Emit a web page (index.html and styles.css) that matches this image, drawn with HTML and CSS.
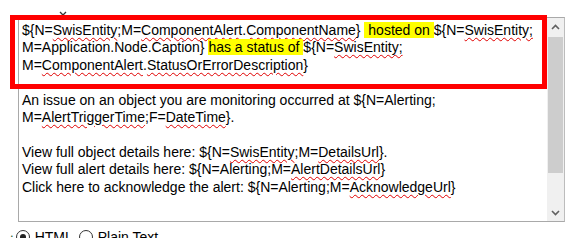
FILE: index.html
```html
<!DOCTYPE html>
<html lang="en">
<head>
    <meta charset="UTF-8">
    <title>Alert message</title>
    <link rel="stylesheet" href="styles.css">
</head>
<body>
    <div class="page">
        <svg class="caret-mark" width="8" height="5" viewBox="0 0 8 5"><path d="M1 1 L4 4 L7 1" fill="none" stroke="#333" stroke-width="1.3"/></svg>

        <div class="editor">
            <div class="editor-text">
                ${N=<span class="sp">SwisEntity</span>;M=<span class="sp">ComponentAlert</span>.<span class="sp">ComponentName</span>} <span class="hl">&nbsp;hosted on </span>${N=<span class="sp">SwisEntity;</span><br>
                M=Application.Node.Caption} <span class="hl">has a status of </span>${N=<span class="sp">SwisEntity;</span><br>
                M=<span class="sp">ComponentAlert</span>.<span class="sp">StatusOrErrorDescription</span>}<br>
                <br>
                An issue on an object you are monitoring occurred at ${N=Alerting;<br>
                M=<span class="sp">AlertTriggerTime</span>;F=<span class="sp">DateTime</span>}.<br>
                <br>
                View full object details here: ${N=<span class="sp">SwisEntity</span>;M=<span class="sp">DetailsUrl</span>}.<br>
                View full alert details here: ${N=Alerting;M=<span class="sp">AlertDetailsUrl</span>}<br>
                Click here to acknowledge the alert: ${N=Alerting;M=<span class="sp">AcknowledgeUrl</span>}
            </div>
            <div class="scrollbar">
                <div class="sb-btn">
                    <svg width="9" height="6" viewBox="0 0 9 6"><path d="M1 5 L4.5 1.5 L8 5" fill="none" stroke="#606060" stroke-width="1.6"/></svg>
                </div>
                <div class="sb-thumb"></div>
                <div class="sb-track"></div>
                <div class="sb-btn">
                    <svg width="9" height="6" viewBox="0 0 9 6"><path d="M1 1 L4.5 4.5 L8 1" fill="none" stroke="#606060" stroke-width="1.6"/></svg>
                </div>
            </div>
        </div>

        <!-- red frame over the subject lines -->
        <div class="callout"></div>

        <div class="format-row">
            <span class="dot">.</span>
            <label><span class="radio checked"></span>HTML</label>
            <label><span class="radio"></span>Plain Text</label>
        </div>
    </div>
</body>
</html>
```

FILE: styles.css
```css
* {
    margin: 0;
    padding: 0;
    box-sizing: border-box;
}

body {
    background: #fff;
    font-family: "Liberation Sans", Arial, sans-serif;
    overflow: hidden;
}

.page {
    position: relative;
    width: 565px;
    height: 238px;
    padding-top: 17px;
    overflow: hidden;
}

.caret-mark {
    position: absolute;
    left: 59px;
    top: 11px;
}

.editor {
    display: flex;
    margin-left: 18px;
    width: 547px;
    height: 205px;
    border: 1px solid #a9a9a9;
    border-right-color: #bcbcbc;
}

.editor-text {
    flex: 1;
    padding: 4px 0 0 3px;
    font-size: 14px;
    line-height: 17.4px;
    color: #000;
    white-space: nowrap;
    overflow: hidden;
}

/* spelling squiggle */
.sp {
    text-decoration: underline wavy #e00000;
    text-decoration-thickness: 1px;
    text-underline-offset: 2px;
}

.hl {
    background: #ffff00;
}

.scrollbar {
    width: 17px;
    display: flex;
    flex-direction: column;
    background: #f0f0f0;
}

.sb-btn {
    height: 17px;
    display: flex;
    align-items: center;
    justify-content: center;
}

.sb-thumb {
    height: 136px;
    margin: 2px 1px 0 1px;
    background: #cdcdcd;
}

.sb-track {
    flex: 1;
}

.callout {
    position: absolute;
    left: 10px;
    top: 15px;
    width: 537px;
    height: 74px;
    border: 5px solid #ff0000;
}

.format-row {
    display: flex;
    align-items: center;
    gap: 6px;
    margin-top: 7px;
    padding-left: 10px;
    font-size: 14px;
    color: #000;
}

.format-row label {
    display: flex;
    align-items: center;
    gap: 5px;
}

.dot {
    font-size: 13px;
    color: #2a5a2a;
    margin-right: -4px;
    position: relative;
    top: -5px;
}

.radio {
    width: 14px;
    height: 14px;
    border: 1px solid #333;
    border-radius: 50%;
    background: #fff;
    position: relative;
}

.radio.checked::after {
    content: "";
    position: absolute;
    left: 3px;
    top: 3px;
    width: 6px;
    height: 6px;
    border-radius: 50%;
    background: #222;
}
```
